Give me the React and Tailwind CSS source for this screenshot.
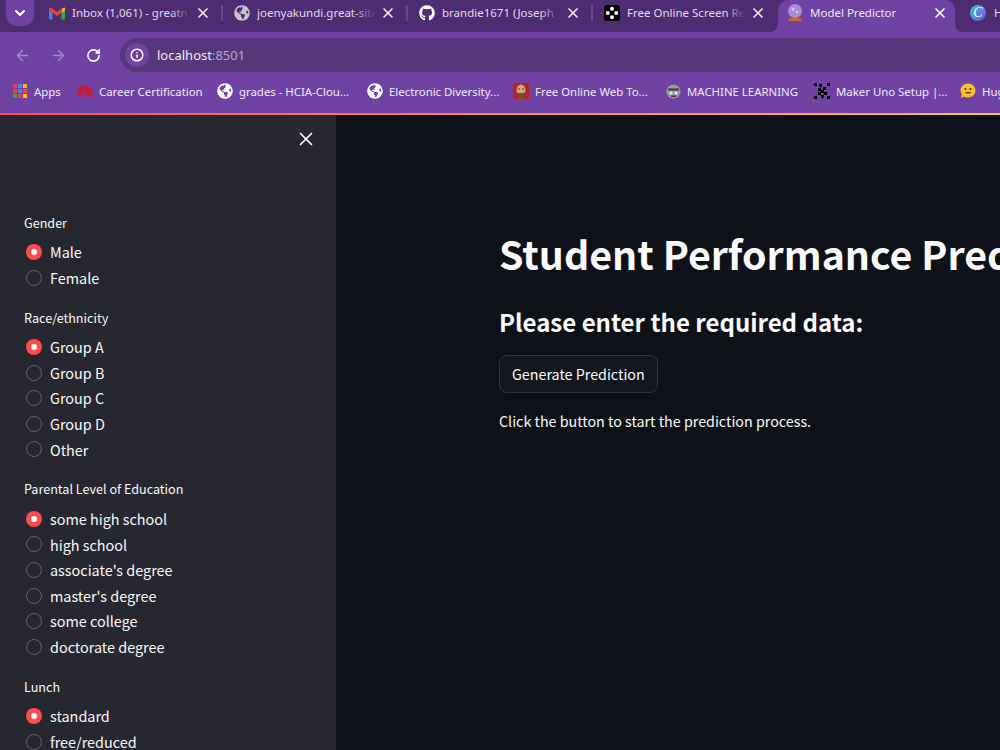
import React from "react";
import { ArrowLeft, ArrowRight, RotateCw, Info, X, ChevronDown } from "lucide-react";
import { FaGithub, FaGlobeAmericas } from "react-icons/fa";
import { SiHuawei } from "react-icons/si";

const sans = "font-['Noto_Sans','Open_Sans',sans-serif]";
const st = "font-['Noto_Sans_CJK_SC','Noto_Sans',sans-serif]";

function GmailIcon() {
  return (
    <svg width="16" height="13" viewBox="0 0 16 12">
      <path d="M0 2v9a1 1 0 0 0 1 1h2.500V5z" fill="#4285f4" />
      <path d="M16 2v9a1 1 0 0 1-1 1h-2.500V5z" fill="#34a853" />
      <path d="M12.500 1.200 16 0v3l-3.500 2.600z" fill="#fbbc04" />
      <path d="M0 3V1.500C0 .3 1.300-.4 2.400.4L8 4.600 13.600.4 12.500 5.200 8 8.500 3.500 5.200z" fill="#ea4335" />
    </svg>
  );
}

function RecorderIcon() {
  return (
    <svg width="16" height="16" viewBox="0 0 16 16">
      <rect width="16" height="16" rx="3" fill="#000" />
      <circle cx="8" cy="3.800" r="2" fill="#fff" />
      <circle cx="8" cy="12.200" r="2" fill="#fff" />
      <circle cx="3.800" cy="8" r="2" fill="#fff" />
      <circle cx="12.200" cy="8" r="2" fill="#fff" />
    </svg>
  );
}

function BallIcon() {
  return (
    <svg width="16" height="18" viewBox="0 0 16 18">
      <circle cx="8" cy="7" r="7" fill="#a98bd6" />
      <circle cx="6" cy="5" r="1.600" fill="#d8c8ee" />
      <circle cx="10" cy="8" r="1.200" fill="#d8c8ee" />
      <path d="M2.500 14h11l1.500 3H1z" fill="#c8683a" />
    </svg>
  );
}

function CanvaIcon() {
  return (
    <div className="flex h-4 w-4 items-center justify-center rounded-full bg-gradient-to-br from-[#19c8c8] to-[#6a3de8] font-['Liberation_Serif',serif] text-[14px] italic leading-none text-white">
      C
    </div>
  );
}

function AppsIcon() {
  const colors = ["#ea4335", "#4285f4", "#fbbc04", "#ea4335", "#4285f4", "#ea4335", "#34a853", "#ea4335", "#fbbc04"];
  return (
    <svg width="14" height="14" viewBox="0 0 14 14">
      {colors.map((c, i) => (
        <rect key={i} x={(i % 3) * 5} y={Math.floor(i / 3) * 5} width="4" height="4" fill={c} />
      ))}
    </svg>
  );
}

function PortraitIcon() {
  return (
    <svg width="16" height="16" viewBox="0 0 16 16">
      <rect width="16" height="16" fill="#b3261e" />
      <ellipse cx="8" cy="7.500" rx="4.500" ry="6" fill="#d9a58a" />
      <rect x="5" y="5.500" width="2" height="1" fill="#5c3a2c" />
      <rect x="9" y="5.500" width="2" height="1" fill="#5c3a2c" />
      <path d="M4 9c1 1 2 1 4 1s3 0 4-1v4l-2 3H6l-2-3z" fill="#7a4a35" />
    </svg>
  );
}

function RobotIcon() {
  return (
    <svg width="15" height="15" viewBox="0 0 15 15">
      <circle cx="7.500" cy="7.500" r="7" fill="#9a9aa0" />
      <rect x="2" y="4.500" width="11" height="2" fill="#3a3a40" />
      <circle cx="5" cy="9" r="1.500" fill="#eee" />
      <circle cx="10" cy="9" r="1.500" fill="#eee" />
      <rect x="5" y="11.500" width="5" height="1.500" fill="#3a3a40" />
    </svg>
  );
}

function DotsIcon() {
  const dots = [[0, 0], [13, 0], [5, 1], [9, 4], [4, 5], [7, 7], [10, 9], [4, 9], [0, 13], [13, 13], [7, 12]];
  return (
    <svg width="16" height="16" viewBox="0 0 16 16">
      {dots.map(([x, y], i) => <rect key={i} x={x} y={y} width="3" height="3" fill="#000" />)}
    </svg>
  );
}

function HugIcon() {
  return (
    <svg width="16" height="16" viewBox="0 0 16 16">
      <path d="M8 .5c4.200 0 7.500 3 7.500 7 0 4.200-3.300 7-7.500 7-1.500 0-3-.3-4-1L1 15l.8-4C1 10 .5 8.800.5 7.500.5 3.500 3.800.5 8 .5z" fill="#fbc02d" />
      <circle cx="5.500" cy="6" r="1.100" fill="#4a3000" />
      <circle cx="10.500" cy="6" r="1.100" fill="#4a3000" />
      <path d="M4.800 9c.8 2.300 5.600 2.300 6.400 0z" fill="#7a3b00" />
    </svg>
  );
}

const tabs = [
  { icon: <GmailIcon />, title: "Inbox (1,061) - greatn", sep: true },
  { icon: <FaGlobeAmericas className="h-4 w-4 text-[#c9c4d2]" />, title: "joenyakundi.great-site", sep: true },
  { icon: <FaGithub className="h-4 w-4 text-white" />, title: "brandie1671 (Joseph", sep: true },
  { icon: <RecorderIcon />, title: "Free Online Screen Re" },
  { icon: <BallIcon />, title: "Model Predictor", active: true },
];

const bookmarks = [
  { w: "w-[65px]", icon: <AppsIcon />, label: "Apps" },
  { w: "w-[140px]", icon: <SiHuawei className="h-4 w-4 text-[#d9141e]" />, label: "Career Certification" },
  { w: "w-[150px]", icon: <FaGlobeAmericas className="h-4 w-4 text-white" />, label: "grades - HCIA-Clou..." },
  { w: "w-[146px]", icon: <FaGlobeAmericas className="h-4 w-4 text-white" />, label: "Electronic Diversity..." },
  { w: "w-[152px]", icon: <PortraitIcon />, label: "Free Online Web To..." },
  { w: "w-[149px]", icon: <RobotIcon />, label: "MACHINE LEARNING" },
  { w: "w-[146px]", icon: <DotsIcon />, label: "Maker Uno Setup |..." },
  { w: "w-[60px]", icon: <HugIcon />, label: "Hugging Face" },
];

const groups = [
  { label: "Gender", options: ["Male", "Female"] },
  { label: "Race/ethnicity", options: ["Group A", "Group B", "Group C", "Group D", "Other"] },
  {
    label: "Parental Level of Education",
    options: ["some high school", "high school", "associate's degree", "master's degree", "some college", "doctorate degree"],
  },
  { label: "Lunch", options: ["standard", "free/reduced"] },
];

function Tab({ tab }) {
  if (tab.active) {
    return (
      <div className="relative flex h-8 w-[177px] shrink-0 items-start rounded-t-[10px] bg-[#6f42a3] pl-[9px] pr-[7px] pt-[4px]">
        {/* flared bottom corners of the active tab */}
        <div className="absolute bottom-0 left-[-8px] h-2 w-2 bg-[#6f42a3]">
          <div className="h-full w-full rounded-br-[8px] bg-[#4d2c72]" />
        </div>
        <div className="absolute bottom-0 right-[-8px] h-2 w-2 bg-[#6f42a3]">
          <div className="h-full w-full rounded-bl-[8px] bg-[#4d2c72]" />
        </div>
        <div className="flex h-[18px] w-4 shrink-0 items-center justify-center">{tab.icon}</div>
        <span className="ml-[7px] flex-1 truncate text-[11.500px] leading-[18px] text-[#efe8f7]">{tab.title}</span>
        <X className="mt-px h-4 w-4 text-white" strokeWidth={2.500} />
      </div>
    );
  }
  return (
    <div className="flex h-8 w-[185px] shrink-0 items-start pl-[11px] pt-[4px]">
      <div className="flex h-[18px] w-4 shrink-0 items-center justify-center">{tab.icon}</div>
      <div className="relative ml-[7px] flex-1 overflow-hidden whitespace-nowrap text-[11.500px] leading-[18px] text-[#e4dcec]">
        {tab.title}
        <div className="absolute inset-y-0 right-0 w-5 bg-gradient-to-r from-transparent to-[#4d2c72]" />
      </div>
      <X className="ml-[5px] mt-px h-4 w-4 shrink-0 text-[#eee]" strokeWidth={2.500} />
      <div className={`ml-[10px] mt-[1px] h-[16px] w-[2px] shrink-0 ${tab.sep ? "bg-[#6b459c]" : "bg-transparent"}`} />
    </div>
  );
}

function Radio({ label, checked }) {
  return (
    <div className="flex h-[25.600px] items-center pl-[2px]">
      {checked ? (
        <div className="flex h-4 w-4 items-center justify-center rounded-full bg-[#ff4b4b]">
          <div className="h-[6px] w-[6px] rounded-full bg-white" />
        </div>
      ) : (
        <div className="h-4 w-4 rounded-full border border-[#63656e] bg-[#262730]" />
      )}
      <span className="ml-2 text-[14.400px] text-[#fafafa]">{label}</span>
    </div>
  );
}

export default function App() {
  return (
    <div className={`flex h-[750px] w-[1000px] flex-col overflow-hidden bg-[#0e1117] ${sans}`}>
      {/* Tab strip */}
      <div className="flex h-8 shrink-0 bg-[#4d2c72]">
        <div className="ml-[6px] flex h-[26px] w-[28px] shrink-0 items-center justify-center rounded-b-[10px] bg-[#6f42a3]">
          <ChevronDown className="h-4 w-4 text-white" strokeWidth={3} />
        </div>
        <div className="ml-1 flex">
          {tabs.map((t) => <Tab key={t.title} tab={t} />)}
          <div className="flex h-[26px] shrink-0 items-center pl-[15px]">
            <CanvaIcon />
            <span className="ml-2 text-[11.500px] text-[#e4dcec]">Home</span>
          </div>
        </div>
      </div>

      {/* Address bar */}
      <div className="flex h-10 shrink-0 items-end bg-[#6f42a3]">
        <div className="flex h-[34px] w-[120px] shrink-0 items-center pl-[14px]">
          <ArrowLeft className="h-[17px] w-[17px] text-[#a58cc6]" />
          <ArrowRight className="ml-[19px] h-[17px] w-[17px] text-[#a58cc6]" />
          <RotateCw className="ml-[19px] h-[15px] w-[15px] text-white" strokeWidth={2.500} />
        </div>
        <div className="flex h-[34px] flex-1 items-center rounded-l-full bg-[#55377a] pl-[5px]">
          <div className="flex h-6 w-6 items-center justify-center rounded-full bg-[#6f42a3]">
            <Info className="h-[14px] w-[14px] text-white" strokeWidth={2.500} />
          </div>
          <span className="ml-[8px] mt-px text-[13px] text-[#f1ebf7]">
            localhost<span className="text-[#b8a8cc]">:8501</span>
          </span>
        </div>
      </div>

      {/* Bookmarks */}
      <div className="flex h-[41px] shrink-0 items-start overflow-hidden bg-[#6f42a3] pl-[12px] pt-[11px]">
        {bookmarks.map((b) => (
          <div key={b.label} className={`flex h-4 shrink-0 items-center gap-[6px] ${b.w}`}>
            <div className="flex w-4 shrink-0 justify-center">{b.icon}</div>
            <span className="mt-px whitespace-nowrap text-[11.400px] text-[#f1ebf7]">{b.label}</span>
          </div>
        ))}
      </div>
      <div className="h-[2px] shrink-0 bg-gradient-to-r from-[#ff4b4b] to-[#ffbd45]" />

      <div className={`flex min-h-0 flex-1 ${st}`}>
        {/* Sidebar */}
        <aside className="w-[336px] shrink-0 bg-[#262730] pl-6 pr-[19px]">
          <div className="flex h-[94.600px] justify-end pt-[13px]">
            <X className="h-[22px] w-[22px] text-white" strokeWidth={1.800} />
          </div>
          <div className="flex flex-col gap-[14.100px]">
            {groups.map((g) => (
              <div key={g.label}>
                <div className="mb-[3.700px] h-[26px] text-[12.600px] leading-[26px] text-[#fafafa]">{g.label}</div>
                {g.options.map((o, i) => <Radio key={o} label={o} checked={i === 0} />)}
              </div>
            ))}
          </div>
        </aside>

        {/* Main */}
        <main className="min-w-0 flex-1 overflow-hidden pl-[163px] pt-[112px]">
          <h1 className="whitespace-nowrap text-[39.300px] font-bold leading-[52px] text-[#fafafa]">
            Student Performance Prediction
          </h1>
          <h2 className="mt-[25px] whitespace-nowrap text-[24px] font-semibold leading-[36px] text-[#fafafa]">
            Please enter the required data:
          </h2>
          <button className="mt-[15px] flex h-[38px] items-center rounded-lg border border-[#33353e] bg-[#13161d] px-3 text-[14.300px] text-[#fafafa]">
            Generate Prediction
          </button>
          <p className="mt-[16px] text-[14.300px] leading-6 text-[#fafafa]">
            Click the button to start the prediction process.
          </p>
        </main>
      </div>
    </div>
  );
}
